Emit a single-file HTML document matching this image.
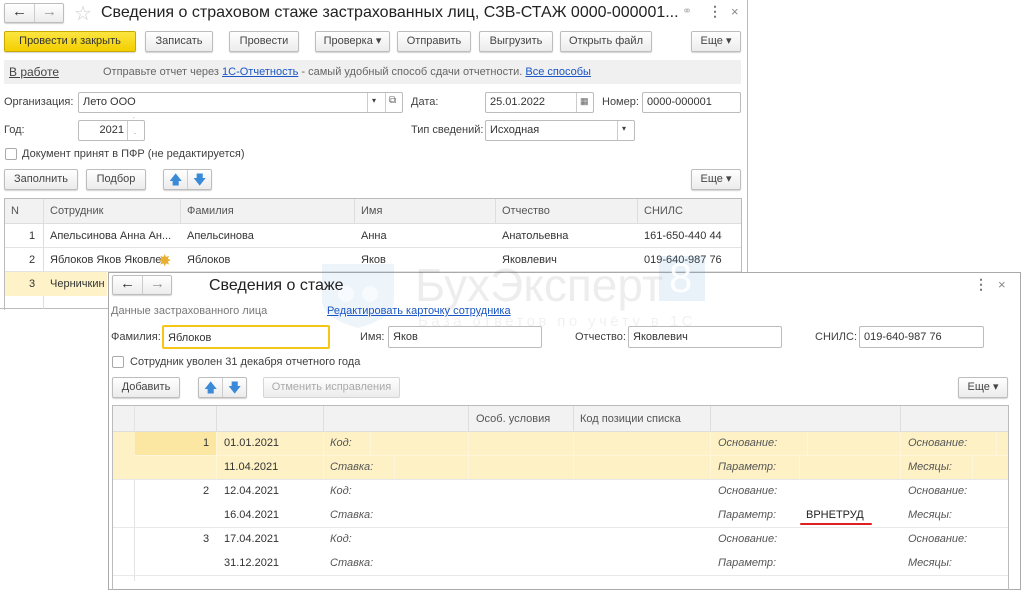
<!DOCTYPE html>
<html><head><meta charset="utf-8"><style>
*{box-sizing:border-box;margin:0;padding:0}
body{width:1024px;height:591px;background:#fff;position:relative;overflow:hidden;font-family:"Liberation Sans",Arial,sans-serif;font-size:11px;color:#404040}
.a{position:absolute;white-space:nowrap}
.btn{position:absolute;border:1px solid #bdbdbd;border-radius:2px;background:linear-gradient(#fff,#ececec);box-shadow:0 1px 1px rgba(0,0,0,.18);text-align:center;color:#444;font-size:11px}
.inp{position:absolute;border:1px solid #bcbcbc;border-radius:2px;background:#fff;color:#333;padding-left:4px}
.lnk{color:#1a56c4;text-decoration:underline}
.th{position:absolute;color:#555}
.vl{position:absolute;width:1px;background:#ddd}
.hl{position:absolute;height:1px;background:#e3e3e3}
i{font-style:italic;color:#555}
</style></head><body>

<!-- BACK WINDOW -->
<div class="a" style="left:0;top:0;width:748px;height:309px;border-right:1px solid #bbb;border-bottom:1px solid #bbb;background:#fff"></div>
<div class="btn" style="left:4px;top:3px;width:60px;height:20px"></div>
<div class="a" style="left:34px;top:4px;width:1px;height:18px;background:#ccc"></div>
<div class="a" style="left:12px;top:3px;font-size:15px;color:#333">&#8592;</div>
<div class="a" style="left:42px;top:3px;font-size:15px;color:#999">&#8594;</div>
<div class="a" style="left:74px;top:1px;font-size:20px;color:#ccc">&#9734;</div>
<div class="a" style="left:101px;top:4px;font-size:16px;color:#222">Сведения о страховом стаже застрахованных лиц, СЗВ-СТАЖ 0000-000001...</div>
<div class="a" style="left:682px;top:4px;font-size:12px;color:#bbb">&#9901;</div>
<div class="a" style="left:708px;top:3px;font-size:14px;color:#777;font-weight:bold">&#8942;</div>
<div class="a" style="left:731px;top:4px;font-size:13px;color:#888">&#215;</div>

<div class="btn" style="left:4px;top:31px;width:132px;height:21px;line-height:19px;background:linear-gradient(#fbe540,#f3cf00);border-color:#c9aa00;color:#333">Провести и закрыть</div>
<div class="btn" style="left:145px;top:31px;width:68px;height:21px;line-height:19px">Записать</div>
<div class="btn" style="left:229px;top:31px;width:70px;height:21px;line-height:19px">Провести</div>
<div class="btn" style="left:315px;top:31px;width:75px;height:21px;line-height:19px">Проверка &#9662;</div>
<div class="btn" style="left:397px;top:31px;width:74px;height:21px;line-height:19px">Отправить</div>
<div class="btn" style="left:479px;top:31px;width:74px;height:21px;line-height:19px">Выгрузить</div>
<div class="btn" style="left:560px;top:31px;width:92px;height:21px;line-height:19px">Открыть файл</div>
<div class="btn" style="left:691px;top:31px;width:50px;height:21px;line-height:19px">Еще &#9662;</div>

<div class="a" style="left:4px;top:60px;width:737px;height:24px;background:#f0f0f0"></div>
<div class="a lnk" style="left:9px;top:65px;font-size:12px;color:#444">В работе</div>
<div class="a" style="left:103px;top:66px;color:#666">Отправьте отчет через <span class="lnk">1С-Отчетность</span> - самый удобный способ сдачи отчетности. <span class="lnk">Все способы</span></div>

<div class="a" style="left:4px;top:96px">Организация:</div>
<div class="inp" style="left:78px;top:92px;width:325px;height:21px;line-height:19px">Лето ООО</div>
<div class="a" style="left:367px;top:93px;width:1px;height:19px;background:#ccc"></div>
<div class="a" style="left:385px;top:93px;width:1px;height:19px;background:#ccc"></div>
<div class="a" style="left:372px;top:96px;font-size:8px">&#9662;</div>
<div class="a" style="left:389px;top:95px;font-size:10px;color:#666">&#10697;</div>
<div class="a" style="left:411px;top:96px">Дата:</div>
<div class="inp" style="left:485px;top:92px;width:109px;height:21px;line-height:19px">25.01.2022</div>
<div class="a" style="left:576px;top:93px;width:1px;height:19px;background:#ccc"></div>
<div class="a" style="left:580px;top:96px;font-size:9px;color:#666">&#9638;</div>
<div class="a" style="left:602px;top:96px">Номер:</div>
<div class="inp" style="left:642px;top:92px;width:99px;height:21px;line-height:19px">0000-000001</div>

<div class="a" style="left:4px;top:124px">Год:</div>
<div class="inp" style="left:78px;top:120px;width:67px;height:21px;line-height:19px;text-align:right;padding-right:20px">2021</div>
<div class="a" style="left:127px;top:121px;width:1px;height:19px;background:#ccc"></div>
<div class="a" style="left:133px;top:118px;font-size:7px">&#729;</div>
<div class="a" style="left:134px;top:129px;font-size:7px">.</div>
<div class="a" style="left:411px;top:124px">Тип сведений:</div>
<div class="inp" style="left:485px;top:120px;width:150px;height:21px;line-height:19px">Исходная</div>
<div class="a" style="left:617px;top:121px;width:1px;height:19px;background:#ccc"></div>
<div class="a" style="left:622px;top:124px;font-size:8px">&#9662;</div>

<div class="a" style="left:5px;top:148px;width:12px;height:12px;border:1px solid #aaa;border-radius:2px"></div>
<div class="a" style="left:22px;top:148px">Документ принят в ПФР (не редактируется)</div>

<div class="btn" style="left:4px;top:169px;width:74px;height:21px;line-height:19px">Заполнить</div>
<div class="btn" style="left:86px;top:169px;width:60px;height:21px;line-height:19px">Подбор</div>
<div class="btn" style="left:163px;top:169px;width:49px;height:21px"></div>
<div class="a" style="left:187px;top:170px;width:1px;height:19px;background:#ccc"></div>
<div class="a" style="left:169px;top:171px;font-size:13px;color:#3a8ad8">&#129093;</div>
<div class="a" style="left:193px;top:171px;font-size:13px;color:#3a8ad8">&#129095;</div>
<div class="btn" style="left:691px;top:169px;width:50px;height:21px;line-height:19px">Еще &#9662;</div>

<div class="a" style="left:4px;top:198px;width:738px;height:112px;border:1px solid #bbb;border-bottom:none"></div>
<div class="a" style="left:5px;top:199px;width:736px;height:25px;background:#f2f2f2;border-bottom:1px solid #ddd"></div>
<div class="vl" style="left:43px;top:199px;height:110px"></div>
<div class="vl" style="left:180px;top:199px;height:25px"></div>
<div class="vl" style="left:354px;top:199px;height:25px"></div>
<div class="vl" style="left:495px;top:199px;height:25px"></div>
<div class="vl" style="left:637px;top:199px;height:25px"></div>
<div class="th" style="left:11px;top:205px">N</div>
<div class="th" style="left:50px;top:205px">Сотрудник</div>
<div class="th" style="left:187px;top:205px">Фамилия</div>
<div class="th" style="left:361px;top:205px">Имя</div>
<div class="th" style="left:502px;top:205px">Отчество</div>
<div class="th" style="left:644px;top:205px">СНИЛС</div>
<div class="hl" style="left:5px;top:247px;width:736px"></div>
<div class="hl" style="left:5px;top:271px;width:736px"></div>
<div class="a" style="left:5px;top:272px;width:102px;height:24px;background:#fdf2c8"></div>
<div class="a" style="left:29px;top:230px;color:#333">1</div>
<div class="a" style="left:50px;top:230px;color:#333">Апельсинова Анна Ан...</div>
<div class="a" style="left:187px;top:230px;color:#333">Апельсинова</div>
<div class="a" style="left:361px;top:230px;color:#333">Анна</div>
<div class="a" style="left:502px;top:230px;color:#333">Анатольевна</div>
<div class="a" style="left:644px;top:230px;color:#333">161-650-440 44</div>
<div class="a" style="left:29px;top:254px;color:#333">2</div>
<div class="a" style="left:50px;top:254px;color:#333">Яблоков Яков Яковлев</div>
<div class="a" style="left:187px;top:254px;color:#333">Яблоков</div>
<div class="a" style="left:361px;top:254px;color:#333">Яков</div>
<div class="a" style="left:502px;top:254px;color:#333">Яковлевич</div>
<div class="a" style="left:644px;top:254px;color:#333">019-640-987 76</div>
<div class="a" style="left:29px;top:278px;color:#333">3</div>
<div class="a" style="left:50px;top:278px;color:#333">Черничкин</div>
<div class="a" style="left:158px;top:251px;font-size:16px;color:#e8b030">&#10040;</div>

<!-- FRONT WINDOW -->
<div class="a" style="left:108px;top:272px;width:913px;height:318px;border:1px solid #aaa;background:#fff"></div>
<div class="btn" style="left:112px;top:275px;width:60px;height:20px"></div>
<div class="a" style="left:142px;top:276px;width:1px;height:18px;background:#ccc"></div>
<div class="a" style="left:120px;top:275px;font-size:15px;color:#333">&#8592;</div>
<div class="a" style="left:150px;top:275px;font-size:15px;color:#999">&#8594;</div>

<!-- watermark (faint) -->
<svg class="a" style="left:320px;top:262px" width="76" height="68" viewBox="0 0 76 68"><path d="M2 2 L74 2 L74 38 Q74 56 38 66 Q2 56 2 38 Z" fill="rgba(74,143,208,.10)"/><circle cx="26" cy="32" r="8" fill="rgba(255,255,255,.6)"/><circle cx="50" cy="32" r="8" fill="rgba(255,255,255,.6)"/></svg>
<div class="a" style="left:415px;top:258px;font-size:46px;color:rgba(0,0,0,.07)">БухЭксперт</div>
<div class="a" style="left:659px;top:256px;width:46px;height:45px;background:rgba(74,143,208,.12)"></div>
<div class="a" style="left:669px;top:254px;font-size:42px;color:rgba(255,255,255,.9)">8</div>
<div class="a" style="left:418px;top:313px;font-size:15px;letter-spacing:3.4px;color:rgba(0,0,0,.06)">База ответов по учёту в 1С</div>

<div class="a" style="left:209px;top:277px;font-size:16px;color:#222">Сведения о стаже</div>
<div class="a" style="left:974px;top:276px;font-size:14px;color:#777;font-weight:bold">&#8942;</div>
<div class="a" style="left:998px;top:277px;font-size:13px;color:#888">&#215;</div>

<div class="a" style="left:111px;top:305px;color:#777">Данные застрахованного лица</div>
<div class="a lnk" style="left:327px;top:305px">Редактировать карточку сотрудника</div>

<div class="a" style="left:111px;top:331px">Фамилия:</div>
<div class="inp" style="left:162px;top:325px;width:168px;height:24px;line-height:22px;border:2px solid #f5c518">Яблоков</div>
<div class="a" style="left:360px;top:331px">Имя:</div>
<div class="inp" style="left:388px;top:326px;width:154px;height:22px;line-height:20px">Яков</div>
<div class="a" style="left:575px;top:331px">Отчество:</div>
<div class="inp" style="left:628px;top:326px;width:154px;height:22px;line-height:20px">Яковлевич</div>
<div class="a" style="left:815px;top:331px">СНИЛС:</div>
<div class="inp" style="left:859px;top:326px;width:125px;height:22px;line-height:20px">019-640-987 76</div>

<div class="a" style="left:112px;top:356px;width:12px;height:12px;border:1px solid #aaa;border-radius:2px"></div>
<div class="a" style="left:130px;top:356px">Сотрудник уволен 31 декабря отчетного года</div>

<div class="btn" style="left:112px;top:377px;width:68px;height:21px;line-height:19px">Добавить</div>
<div class="btn" style="left:198px;top:377px;width:49px;height:21px"></div>
<div class="a" style="left:222px;top:378px;width:1px;height:19px;background:#ccc"></div>
<div class="a" style="left:204px;top:379px;font-size:13px;color:#3a8ad8">&#129093;</div>
<div class="a" style="left:228px;top:379px;font-size:13px;color:#3a8ad8">&#129095;</div>
<div class="btn" style="left:263px;top:377px;width:137px;height:21px;line-height:19px;color:#aaa;box-shadow:none;border-color:#d5d5d5">Отменить исправления</div>
<div class="btn" style="left:958px;top:377px;width:50px;height:21px;line-height:19px">Еще &#9662;</div>

<!-- table -->
<div class="a" style="left:112px;top:405px;width:897px;height:185px;border:1px solid #bbb;border-bottom:none"></div>
<div class="a" style="left:113px;top:406px;width:895px;height:26px;background:#f2f2f2;border-bottom:1px solid #ddd"></div>
<div class="vl" style="left:134px;top:406px;height:175px;background:#e3e3e3"></div>
<div class="vl" style="left:216px;top:406px;height:26px"></div>
<div class="vl" style="left:323px;top:406px;height:26px"></div>
<div class="vl" style="left:468px;top:406px;height:26px"></div>
<div class="vl" style="left:573px;top:406px;height:26px"></div>
<div class="vl" style="left:710px;top:406px;height:26px"></div>
<div class="vl" style="left:900px;top:406px;height:26px"></div>
<div class="th" style="left:476px;top:413px">Особ. условия</div>
<div class="th" style="left:580px;top:413px">Код позиции списка</div>

<div class="a" style="left:113px;top:432px;width:895px;height:47px;background:#fdf1c5"></div>
<div class="a" style="left:135px;top:432px;width:81px;height:24px;background:#fbe6a2"></div>
<div class="a" style="left:216px;top:432px;width:1px;height:47px;background:#fff6da"></div>
<div class="a" style="left:135px;top:455px;width:873px;height:1px;background:#fff6da"></div>
<div class="a" style="left:323px;top:432px;width:1px;height:47px;background:#fff6da"></div>
<div class="a" style="left:370px;top:432px;width:1px;height:23px;background:#fff6da"></div>
<div class="a" style="left:394px;top:456px;width:1px;height:23px;background:#fff6da"></div>
<div class="a" style="left:468px;top:432px;width:1px;height:47px;background:#fff6da"></div>
<div class="a" style="left:573px;top:432px;width:1px;height:47px;background:#fff6da"></div>
<div class="a" style="left:710px;top:432px;width:1px;height:47px;background:#fff6da"></div>
<div class="a" style="left:807px;top:432px;width:1px;height:23px;background:#fff6da"></div>
<div class="a" style="left:799px;top:456px;width:1px;height:23px;background:#fff6da"></div>
<div class="a" style="left:900px;top:432px;width:1px;height:47px;background:#fff6da"></div>
<div class="a" style="left:996px;top:432px;width:1px;height:23px;background:#fff6da"></div>
<div class="a" style="left:972px;top:456px;width:1px;height:23px;background:#fff6da"></div>
<div class="hl" style="left:113px;top:479px;width:895px;background:#e8e8e8"></div>
<div class="hl" style="left:113px;top:527px;width:895px;background:#e8e8e8"></div>
<div class="hl" style="left:113px;top:575px;width:895px;background:#e8e8e8"></div>

<div class="a" style="left:203px;top:437px;color:#333">1</div>
<div class="a" style="left:224px;top:437px;color:#333">01.01.2021</div>
<div class="a" style="left:224px;top:461px;color:#333">11.04.2021</div>
<div class="a" style="left:203px;top:485px;color:#333">2</div>
<div class="a" style="left:224px;top:485px;color:#333">12.04.2021</div>
<div class="a" style="left:224px;top:509px;color:#333">16.04.2021</div>
<div class="a" style="left:203px;top:533px;color:#333">3</div>
<div class="a" style="left:224px;top:533px;color:#333">17.04.2021</div>
<div class="a" style="left:224px;top:557px;color:#333">31.12.2021</div>

<div class="a" style="left:330px;top:437px"><i>Код:</i></div>
<div class="a" style="left:330px;top:461px"><i>Ставка:</i></div>
<div class="a" style="left:330px;top:485px"><i>Код:</i></div>
<div class="a" style="left:330px;top:509px"><i>Ставка:</i></div>
<div class="a" style="left:330px;top:533px"><i>Код:</i></div>
<div class="a" style="left:330px;top:557px"><i>Ставка:</i></div>

<div class="a" style="left:718px;top:437px"><i>Основание:</i></div>
<div class="a" style="left:718px;top:461px"><i>Параметр:</i></div>
<div class="a" style="left:718px;top:485px"><i>Основание:</i></div>
<div class="a" style="left:718px;top:509px"><i>Параметр:</i></div>
<div class="a" style="left:718px;top:533px"><i>Основание:</i></div>
<div class="a" style="left:718px;top:557px"><i>Параметр:</i></div>

<div class="a" style="left:908px;top:437px"><i>Основание:</i></div>
<div class="a" style="left:908px;top:461px"><i>Месяцы:</i></div>
<div class="a" style="left:908px;top:485px"><i>Основание:</i></div>
<div class="a" style="left:908px;top:509px"><i>Месяцы:</i></div>
<div class="a" style="left:908px;top:533px"><i>Основание:</i></div>
<div class="a" style="left:908px;top:557px"><i>Месяцы:</i></div>

<div class="a" style="left:806px;top:509px;color:#222">ВРНЕТРУД</div>
<div class="a" style="left:800px;top:523px;width:72px;height:2px;background:#e02020;border-radius:1px"></div>
</body></html>
